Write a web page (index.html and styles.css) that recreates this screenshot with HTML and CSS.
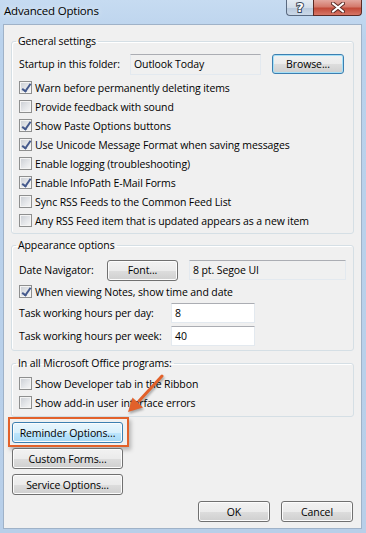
FILE: index.html
```html
<!DOCTYPE html>
<html lang="en">
<head>
  <meta charset="UTF-8" />
  <title>Advanced Options</title>
  <link rel="stylesheet" href="styles.css">
</head>
<body>

  <div class="window">
    <div class="titlebar">
      <span class="title">Advanced Options</span>
      <div class="caption-btns">
        <span class="cap-btn help">?</span>
        <span class="cap-btn close">
          <svg viewBox="0 0 14 11" width="14" height="11">
            <path d="M2 1.5 L12 9.5 M12 1.5 L2 9.5" stroke="#5b2b25" stroke-width="4" stroke-linecap="round"/>
            <path d="M2 1.5 L12 9.5 M12 1.5 L2 9.5" stroke="#fff" stroke-width="2.2" stroke-linecap="round"/>
          </svg>
        </span>
      </div>
    </div>

    <div class="client">

      <fieldset class="group group-general">
        <legend>General settings</legend>
        <div class="row row-startup">
          <span class="lbl lbl-startup">Startup in this folder:</span>
          <span class="field readonly field-folder">Outlook Today</span>
          <button class="btn btn-default btn-browse">Browse...</button>
        </div>
        <div class="check first"><span class="cb on"></span>Warn before permanently deleting items</div>
        <div class="check"><span class="cb"></span>Provide feedback with sound</div>
        <div class="check"><span class="cb on"></span>Show Paste Options buttons</div>
        <div class="check"><span class="cb on"></span>Use Unicode Message Format when saving messages</div>
        <div class="check"><span class="cb"></span>Enable logging (troubleshooting)</div>
        <div class="check"><span class="cb on"></span>Enable InfoPath E-Mail Forms</div>
        <div class="check"><span class="cb"></span>Sync RSS Feeds to the Common Feed List</div>
        <div class="check"><span class="cb"></span>Any RSS Feed item that is updated appears as a new item</div>
      </fieldset>

      <fieldset class="group group-appearance">
        <legend>Appearance options</legend>
        <div class="row row-date">
          <span class="lbl lbl-date">Date Navigator:</span>
          <button class="btn btn-font">Font...</button>
          <span class="field readonly field-font">8 pt. Segoe UI</span>
        </div>
        <div class="check check-notes"><span class="cb on"></span>When viewing Notes, show time and date</div>
        <div class="row row-task row-day">
          <span class="lbl lbl-task">Task working hours per day:</span>
          <span class="field field-hours">8</span>
        </div>
        <div class="row row-task row-week">
          <span class="lbl lbl-task">Task working hours per week:</span>
          <span class="field field-hours">40</span>
        </div>
      </fieldset>

      <fieldset class="group group-office">
        <legend>In all Microsoft Office programs:</legend>
        <div class="check first"><span class="cb"></span>Show Developer tab in the Ribbon</div>
        <div class="check"><span class="cb"></span>Show add-in user interface errors</div>
      </fieldset>

      <div class="side-btns">
        <span class="highlight"><button class="btn btn-side btn-hover">Reminder Options...</button></span>
        <button class="btn btn-side btn-custom">Custom Forms...</button>
        <button class="btn btn-side btn-service">Service Options...</button>
      </div>

      <div class="dialog-btns">
        <button class="btn btn-dialog">OK</button>
        <button class="btn btn-dialog">Cancel</button>
      </div>
    </div>

    <!-- callout arrow pointing at Reminder Options -->
    <svg class="arrow" viewBox="0 0 50 50" width="50" height="50">
      <path d="M42 6 L19 31" stroke="#e2612a" stroke-width="3" stroke-linecap="round"/>
      <path d="M8 42 L12.5 27.5 L23 37.5 Z" fill="#e2612a"/>
    </svg>
  </div>

</body>
</html>
```

FILE: styles.css
```css
* {
  margin: 0;
  padding: 0;
  box-sizing: border-box;
}
body {
  background-color: #b9d1ea;
  font-family: "Open Sans", "Noto Sans", sans-serif;
  font-size: 10.5px;
  letter-spacing: -0.1px;
  color: #000;
}
.window {
  position: relative;
  width: 366px;
  height: 533px;
  padding: 0 4px 4px 3px;
  display: flex;
  flex-direction: column;
  background: linear-gradient(180deg, #c6dbf1 0%, #bad2ec 40px, #b8cfe9 100%);
}
.titlebar {
  height: 24px;
  display: flex;
  justify-content: space-between;
  align-items: flex-start;
}
.title {
  padding: 3px 0 0 1px;
  font-size: 11.5px;
  letter-spacing: -0.2px;
  line-height: 16px;
  color: #000;
  text-shadow: 0 0 6px rgba(255, 255, 255, 0.8);
}
.caption-btns {
  display: flex;
}
.cap-btn {
  height: 16px;
  display: flex;
  align-items: center;
  justify-content: center;
  border: 1px solid #5a6a80;
  border-top: none;
}
.help {
  width: 27px;
  border-radius: 0 0 0 4px;
  border-right: none;
  background: linear-gradient(180deg, #e4ebf3 0%, #d2dde9 50%, #b8c9dc 51%, #cbd8e7 100%);
  color: #fff;
  font-family: "DejaVu Sans", sans-serif;
  font-weight: bold;
  font-size: 13px;
  letter-spacing: 0;
  line-height: 14px;
  paint-order: stroke fill;
  -webkit-text-stroke: 2px #3a4658;
}
.close {
  width: 49px;
  border-color: #5c2a24;
  border-radius: 0 0 4px 0;
  background: linear-gradient(180deg, #e3a79e 0%, #d47a6c 45%, #c24a38 55%, #d77666 100%);
}
.client {
  flex: 1;
  background-color: #f0f0f0;
  border: 1px solid #9fb2c8;
  padding: 0 7px;
  display: flex;
  flex-direction: column;
}
.group {
  border: 1px solid #d5dfe5;
  border-radius: 3px;
  padding: 0 7px;
  box-shadow: inset 1px 1px 0 #fff;
}
.group legend {
  margin-left: -3px;
  padding: 0 2px;
  line-height: 15px;
}
.group-general {
  margin-top: 9px;
  padding-bottom: 3px;
}
.group-appearance {
  margin-top: 4px;
  padding-bottom: 4px;
}
.group-office {
  margin-top: 5px;
  padding-bottom: 4px;
}
.row {
  display: flex;
  align-items: center;
}
.lbl {
  white-space: nowrap;
  flex-shrink: 0;
}
.row-startup {
  margin-top: 4px;
  height: 22px;
}
.lbl-startup {
  width: 111px;
}
.field {
  height: 21px;
  border: 1px solid #e3e9ef;
  border-top-color: #abadb3;
  background-color: #fff;
  padding: 0 3px;
  display: flex;
  align-items: center;
  flex-shrink: 0;
}
.field.readonly {
  background-color: #f0f0f0;
}
.field-folder {
  width: 131px;
}
.btn {
  font-family: inherit;
  font-size: 10.5px;
  letter-spacing: -0.1px;
  color: #000;
  height: 21px;
  flex-shrink: 0;
  border: 1px solid #707070;
  border-radius: 3px;
  background: linear-gradient(180deg, #f2f2f2 0%, #ebebeb 50%, #dddddd 51%, #cfcfcf 100%);
  box-shadow: inset 0 0 0 1px #fcfcfc;
  cursor: pointer;
}
.btn-default {
  border-color: #3c7fb1;
  box-shadow: inset 0 0 0 1px #a6e0f7;
}
.btn-browse {
  width: 72px;
  height: 20px;
  margin-left: 11px;
}
.check {
  display: flex;
  align-items: center;
  height: 19px;
  gap: 3px;
  white-space: nowrap;
}
.check.first {
  margin-top: 3px;
}
.cb {
  width: 13px;
  height: 13px;
  flex-shrink: 0;
  border: 1px solid #8e8f8f;
  background: linear-gradient(135deg, #c9cdd3 0%, #e4e6e9 55%, #f7f7f7 100%);
  box-shadow: inset 0 0 0 1px #f4f4f4;
  position: relative;
}
.cb.on::after {
  content: "";
  position: absolute;
  left: 4px;
  top: 0;
  width: 3px;
  height: 8px;
  border: solid #44598c;
  border-width: 0 2px 2px 0;
  transform: rotate(35deg);
}
.row-date {
  margin-top: 6px;
  height: 22px;
}
.lbl-date {
  width: 88px;
}
.btn-font {
  width: 71px;
}
.field-font {
  width: 157px;
  height: 20px;
  margin-left: 11px;
}
.check-notes {
  margin-top: 1px;
}
.row-task {
  height: 20px;
}
.row-day {
  margin-top: 2px;
}
.row-week {
  margin-top: 3px;
}
.lbl-task {
  width: 152px;
}
.field-hours {
  width: 84px;
  height: 20px;
}
.side-btns {
  display: flex;
  flex-direction: column;
  align-items: flex-start;
}
.highlight {
  margin-left: -3px;
  padding: 3px 4px 2px 2px;
  border: 2px solid #e2612a;
  box-shadow: 2px 3px 4px rgba(0, 0, 0, 0.25);
}
.btn-side {
  width: 111px;
}
.btn-hover {
  display: block;
  border-color: #3c7fb1;
  background: linear-gradient(180deg, #eaf6fd 0%, #d9f0fc 50%, #bee6fd 51%, #a7d9f5 100%);
}
.btn-custom {
  margin-top: 1px;
  margin-left: 1px;
}
.btn-service {
  margin-top: 5px;
  margin-left: 1px;
}
.dialog-btns {
  display: flex;
  justify-content: flex-end;
  gap: 11px;
  margin-top: 6px;
  padding-right: 1px;
}
.btn-dialog {
  width: 72px;
}
.arrow {
  position: absolute;
  left: 120px;
  top: 370px;
  filter: drop-shadow(1px 2px 1px rgba(0, 0, 0, 0.3));
}
```
